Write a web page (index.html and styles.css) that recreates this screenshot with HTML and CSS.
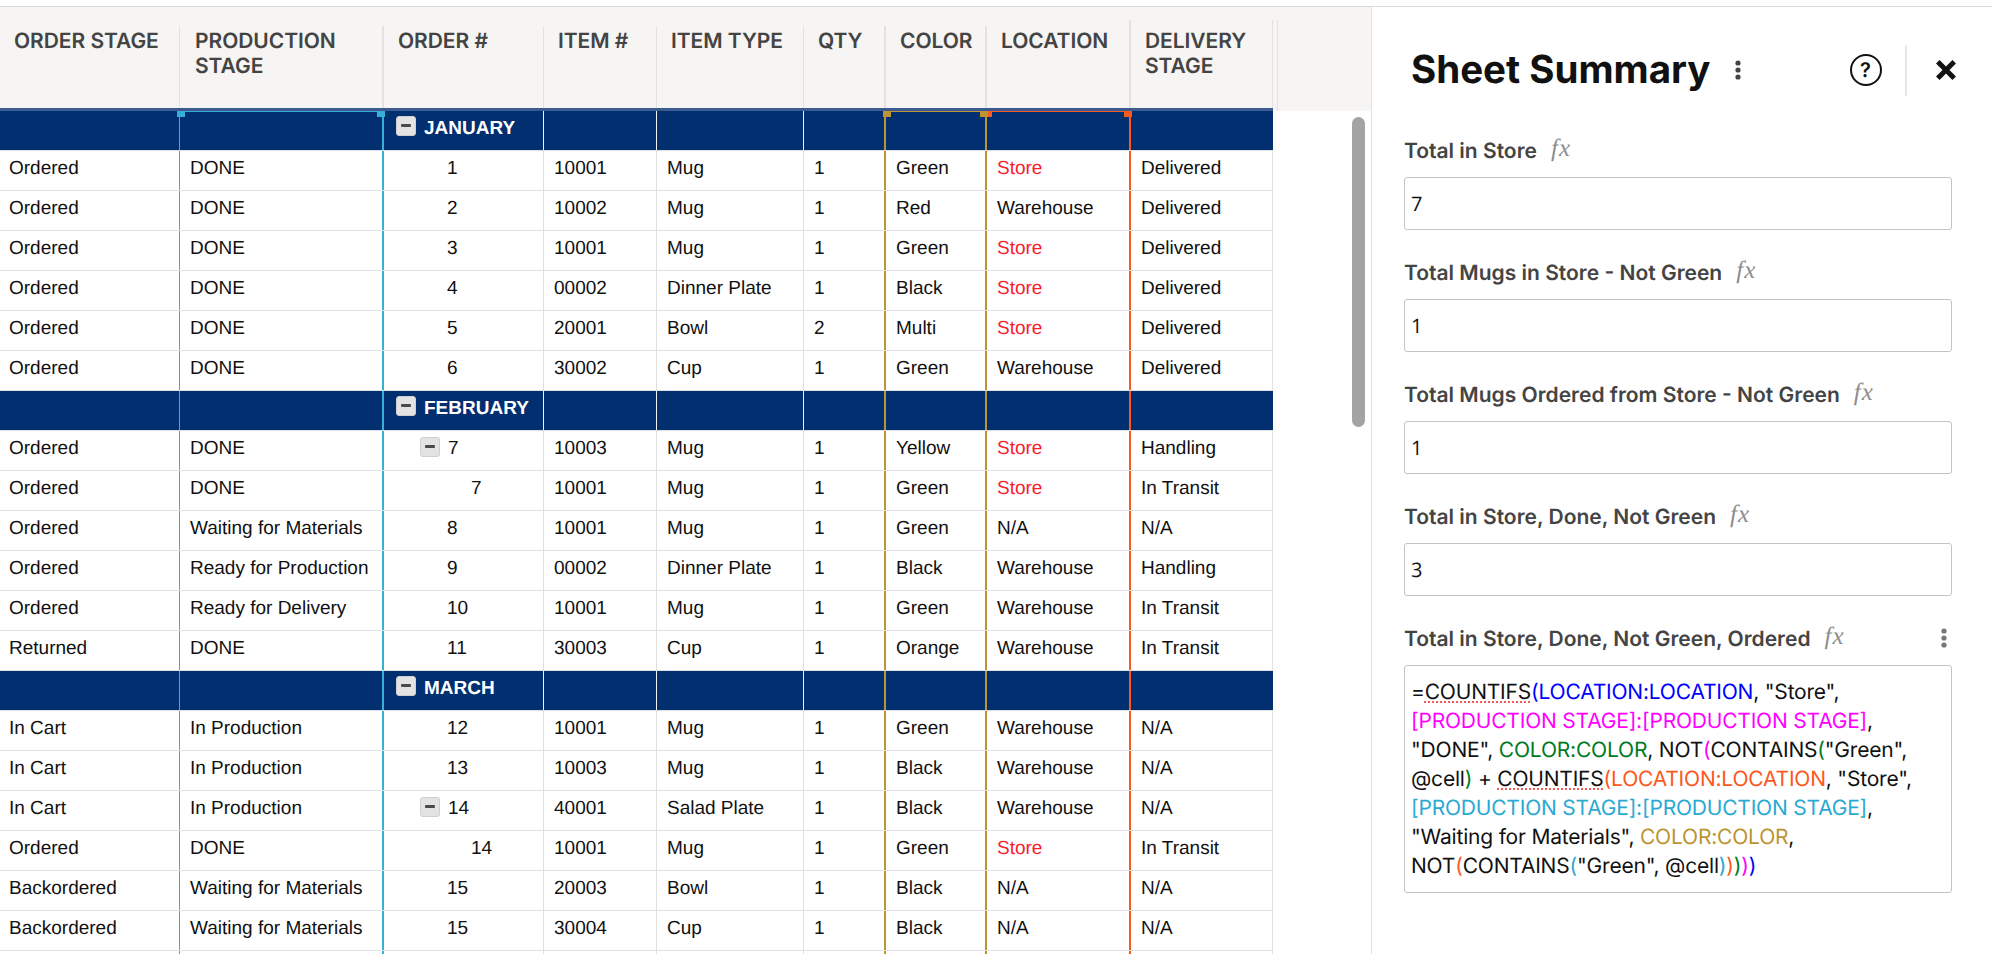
FILE: index.html
```html
<!DOCTYPE html>
<html lang="en">
<head>
<meta charset="utf-8">
<title>Sheet Summary</title>
<link rel="stylesheet" href="styles.css">
</head>
<body>
<div class="app">
  <main class="sheet">
    <div class="grid">
      <div class="row head">
        <div>ORDER STAGE</div><div>PRODUCTION STAGE</div><div>ORDER #</div><div>ITEM #</div><div>ITEM TYPE</div><div>QTY</div><div>COLOR</div><div>LOCATION</div><div>DELIVERY STAGE</div>
      </div>
      <div class="row group first">
        <div></div>
        <div><i class="handle h-blue h-l"></i></div>
        <div class="month"><i class="handle h-blue h-e"></i><span class="toggle"></span>JANUARY</div>
        <div></div><div></div><div></div>
        <div><i class="handle h-gold h-l"></i></div>
        <div><i class="handle h-gold h-e"></i><i class="handle h-orange h-r"></i></div>
        <div><i class="handle h-orange h-e"></i></div>
      </div>
      <div class="row"><div>Ordered</div><div>DONE</div><div class="num">1</div><div>10001</div><div>Mug</div><div>1</div><div>Green</div><div class="red">Store</div><div>Delivered</div></div>
      <div class="row"><div>Ordered</div><div>DONE</div><div class="num">2</div><div>10002</div><div>Mug</div><div>1</div><div>Red</div><div>Warehouse</div><div>Delivered</div></div>
      <div class="row"><div>Ordered</div><div>DONE</div><div class="num">3</div><div>10001</div><div>Mug</div><div>1</div><div>Green</div><div class="red">Store</div><div>Delivered</div></div>
      <div class="row"><div>Ordered</div><div>DONE</div><div class="num">4</div><div>00002</div><div>Dinner Plate</div><div>1</div><div>Black</div><div class="red">Store</div><div>Delivered</div></div>
      <div class="row"><div>Ordered</div><div>DONE</div><div class="num">5</div><div>20001</div><div>Bowl</div><div>2</div><div>Multi</div><div class="red">Store</div><div>Delivered</div></div>
      <div class="row"><div>Ordered</div><div>DONE</div><div class="num">6</div><div>30002</div><div>Cup</div><div>1</div><div>Green</div><div>Warehouse</div><div>Delivered</div></div>
      <div class="row group">
        <div></div><div></div><div class="month"><span class="toggle"></span>FEBRUARY</div><div></div><div></div><div></div><div></div><div></div><div></div>
      </div>
      <div class="row"><div>Ordered</div><div>DONE</div><div class="num parent"><span class="toggle"></span>7</div><div>10003</div><div>Mug</div><div>1</div><div>Yellow</div><div class="red">Store</div><div>Handling</div></div>
      <div class="row"><div>Ordered</div><div>DONE</div><div class="num child">7</div><div>10001</div><div>Mug</div><div>1</div><div>Green</div><div class="red">Store</div><div>In Transit</div></div>
      <div class="row"><div>Ordered</div><div>Waiting for Materials</div><div class="num">8</div><div>10001</div><div>Mug</div><div>1</div><div>Green</div><div>N/A</div><div>N/A</div></div>
      <div class="row"><div>Ordered</div><div>Ready for Production</div><div class="num">9</div><div>00002</div><div>Dinner Plate</div><div>1</div><div>Black</div><div>Warehouse</div><div>Handling</div></div>
      <div class="row"><div>Ordered</div><div>Ready for Delivery</div><div class="num">10</div><div>10001</div><div>Mug</div><div>1</div><div>Green</div><div>Warehouse</div><div>In Transit</div></div>
      <div class="row"><div>Returned</div><div>DONE</div><div class="num">11</div><div>30003</div><div>Cup</div><div>1</div><div>Orange</div><div>Warehouse</div><div>In Transit</div></div>
      <div class="row group">
        <div></div><div></div><div class="month"><span class="toggle"></span>MARCH</div><div></div><div></div><div></div><div></div><div></div><div></div>
      </div>
      <div class="row"><div>In Cart</div><div>In Production</div><div class="num">12</div><div>10001</div><div>Mug</div><div>1</div><div>Green</div><div>Warehouse</div><div>N/A</div></div>
      <div class="row"><div>In Cart</div><div>In Production</div><div class="num">13</div><div>10003</div><div>Mug</div><div>1</div><div>Black</div><div>Warehouse</div><div>N/A</div></div>
      <div class="row"><div>In Cart</div><div>In Production</div><div class="num parent"><span class="toggle"></span>14</div><div>40001</div><div>Salad Plate</div><div>1</div><div>Black</div><div>Warehouse</div><div>N/A</div></div>
      <div class="row"><div>Ordered</div><div>DONE</div><div class="num child">14</div><div>10001</div><div>Mug</div><div>1</div><div>Green</div><div class="red">Store</div><div>In Transit</div></div>
      <div class="row"><div>Backordered</div><div>Waiting for Materials</div><div class="num">15</div><div>20003</div><div>Bowl</div><div>1</div><div>Black</div><div>N/A</div><div>N/A</div></div>
      <div class="row"><div>Backordered</div><div>Waiting for Materials</div><div class="num">15</div><div>30004</div><div>Cup</div><div>1</div><div>Black</div><div>N/A</div><div>N/A</div></div>
      <div class="row"><div></div><div></div><div></div><div></div><div></div><div></div><div></div><div></div><div></div></div>
    </div>
    <div class="scrollbar"></div>
  </main>
  <aside class="panel">
    <header class="panel-head">
      <h1>Sheet Summary</h1>
      <svg class="dots" width="6" height="20" viewBox="0 0 6 20"><circle cx="3" cy="3" r="2.6"/><circle cx="3" cy="10" r="2.6"/><circle cx="3" cy="17" r="2.6"/></svg>
      <span class="help">?</span>
      <span class="divider"></span>
      <svg class="close" width="20" height="20" viewBox="0 0 20 20"><path d="M1.8 1.8 18.2 18.2M18.2 1.8 1.8 18.2"/></svg>
    </header>
    <section class="field">
      <div class="label">Total in Store<span class="fx">fx</span></div>
      <div class="input">7</div>
    </section>
    <section class="field">
      <div class="label">Total Mugs in Store - Not Green<span class="fx">fx</span></div>
      <div class="input">1</div>
    </section>
    <section class="field">
      <div class="label">Total Mugs Ordered from Store - Not Green<span class="fx">fx</span></div>
      <div class="input">1</div>
    </section>
    <section class="field">
      <div class="label">Total in Store, Done, Not Green<span class="fx">fx</span></div>
      <div class="input">3</div>
    </section>
    <section class="field">
      <div class="label">Total in Store, Done, Not Green, Ordered<span class="fx">fx</span>
        <svg class="dots more" width="6" height="20" viewBox="0 0 6 20"><circle cx="3" cy="3" r="2.6"/><circle cx="3" cy="10" r="2.6"/><circle cx="3" cy="17" r="2.6"/></svg>
      </div>
      <div class="input formula">=<span class="sq">COUNTIFS</span><span class="blue">(LOCATION:LOCATION</span>, "Store",<br><span class="pink">[PRODUCTION STAGE]:[PRODUCTION STAGE]</span>,<br>"DONE", <span class="green">COLOR:COLOR</span>, NOT<span class="pink">(</span>CONTAINS<span class="green">(</span>"Green",<br>@cell<span class="green">)</span> + <span class="sq">COUNTIFS</span><span class="orange">(LOCATION:LOCATION</span>, "Store",<br><span class="cyan">[PRODUCTION STAGE]:[PRODUCTION STAGE]</span>,<br>"Waiting for Materials", <span class="gold">COLOR:COLOR</span>,<br>NOT<span class="orange">(</span>CONTAINS<span class="cyan">(</span>"Green", @cell<span class="cyan">)</span><span class="orange">)</span><span class="green">)</span><span class="pink">)</span><span class="blue">)</span></div>
    </section>
  </aside>
</div>
</body>
</html>
```
FILE: styles.css
```css
* { box-sizing: border-box; }
html, body { margin: 0; height: 100%; overflow: hidden; background: #fff; }
body { padding-top: 6px; text-rendering: geometricPrecision; }
.app {
  display: flex;
  height: 948px;
  border-top: 1px solid #d9d9d9;
  overflow: hidden;
}
.sheet {
  position: relative;
  width: 1371px;
  flex: none;
  height: 100%;
  overflow: hidden;
  background: linear-gradient(#f6f5f3 104px, #fff 104px);
}
.grid { display: flex; flex-direction: column; width: 1273px; }
.row {
  display: grid;
  grid-template-columns: 179px 203px 161px 113px 147px 81px 101px 144px 144px;
  height: 40px;
  flex: none;
  font: 19px/26px "Liberation Sans", Arial, sans-serif;
  color: #111;
  background: #fff;
  border-bottom: 1px solid #e0e0e0;
}
.row > div {
  position: relative;
  padding: 5px 0 0 10px;
  border-left: 1px solid #e0e0e0;
  white-space: nowrap;
}
.row > :nth-child(1) { border-left: 0; padding-left: 9px; }
.row > :nth-child(2) { border-left-color: #36afd6; }
.row > :nth-child(3) { border-left: 2px solid #36afd6; }
.row > :nth-child(7), .row > :nth-child(8) { border-left: 2px solid #bd9432; }
.row > :nth-child(9) { border-left: 2px solid #f95a1d; border-right: 1px solid #e0e0e0; }
.row > .num { padding-left: 63px; }
.row > .num.parent { padding-left: 36px; display: flex; gap: 8px; }
.row > .num.child { padding-left: 87px; }
.red { color: #f5222d; }

.head {
  height: 104px;
  background: #f6f5f3;
  border-bottom: 3px solid #3d5b8f;
  font: 600 21px/25px Inter, "Liberation Sans", sans-serif;
  letter-spacing: -0.05px;
  color: #444;
}
.row.head > div {
  margin-top: 19px;
  padding: 3px 4px 0 14px;
  white-space: normal;
  border-left-color: #e2e2e0;
}
.row.head > :nth-child(1) { padding-left: 14px; }
.row.head > :nth-child(2) { padding-left: 15px; }
.row.head > :nth-child(9) { border-right: 1px solid #e2e2e0; margin-top: 13px; padding-top: 9px; }
.row.head > :nth-child(9)::after {
  content: "";
  position: absolute;
  top: 0;
  bottom: -3px;
  right: -6px;
  width: 1px;
  background: #e2e2e0;
}

.group {
  background: #012f6f;
  color: #fff;
  font-weight: 700;
  border-bottom: 1px solid #e0e0e0;
}
.row.group > :nth-child(4), .row.group > :nth-child(5), .row.group > :nth-child(6) { border-left-color: #f1f1f1; }
.row.group > :nth-child(9) { border-right-color: #012f6f; }
.row.group > .month { display: flex; gap: 8px; padding-left: 12px; padding-top: 5px; }
.row.group > .month .toggle { margin-top: 0; }
.row.first > :nth-child(2) { box-shadow: inset 0 1px 0 #36afd6; }
.row.first > :nth-child(7) { box-shadow: inset 0 1px 0 #bd9432; }
.row.first > :nth-child(8) { box-shadow: inset 0 1px 0 #f95a1d; }

.toggle {
  position: relative;
  flex: none;
  width: 20px;
  height: 20px;
  margin-top: 1px;
  border-radius: 3px;
  background: #e3e3e3;
  border: 1px solid #cfcfcf;
}
.toggle::after {
  content: "";
  position: absolute;
  left: 4px;
  right: 4px;
  top: 7px;
  height: 3px;
  border-radius: 1px;
  background: #4a4a4a;
}
.handle { position: absolute; top: 0; width: 8px; height: 6px; }
.h-l { left: -3px; }
.h-e { left: -7px; }
.h-r { left: 1px; width: 4px; }
.h-blue { background: #36afd6; }
.h-gold { background: #bd9432; }
.h-orange { background: #f95a1d; }

.scrollbar {
  position: absolute;
  left: 1352px;
  top: 110px;
  width: 13px;
  height: 310px;
  border-radius: 7px;
  background: #a3a3a3;
}

.panel {
  flex: 1;
  min-width: 0;
  border-left: 1px solid #e0e0e0;
  padding: 0 37px 0 32px;
  font-family: Inter, "Liberation Sans", sans-serif;
}
.panel-head {
  display: flex;
  align-items: center;
  height: 52px;
  margin-top: 37px;
  margin-bottom: 41px;
  padding-left: 7px;
}
.panel-head h1 {
  margin: 0;
  font: 700 38.5px/52px Inter, "Liberation Sans", sans-serif;
  color: #111;
  white-space: nowrap;
}
.dots { flex: none; fill: #444; }
.panel-head .dots { margin-left: 24px; }
.help {
  flex: none;
  width: 32px;
  height: 32px;
  margin-left: 109px;
  border: 2px solid #111;
  border-radius: 50%;
  font: 600 20px/28px Inter, sans-serif;
  text-align: center;
  color: #111;
}
.divider { flex: none; width: 2px; height: 51px; margin-left: 23px; background: #e6e6e6; }
.close { flex: none; margin-left: 29px; stroke: #111; stroke-width: 5; fill: none; }

.label {
  display: flex;
  align-items: center;
  height: 30px;
  margin-bottom: 10px;
  font: 600 21px/30px Inter, "Liberation Sans", sans-serif;
  color: #444;
  white-space: nowrap;
}
.fx {
  margin-left: 14px;
  margin-top: -7px;
  font: italic 400 25px/24px "Liberation Serif", serif;
  color: #8c8c8c;
  letter-spacing: 1px;
}
.more { margin-left: auto; margin-right: 8px; margin-top: -4px; fill: #777; }
.input {
  width: 548px;
  height: 53px;
  margin-bottom: 29px;
  padding: 11px 6px 9px;
  border: 1px solid #c4c4c4;
  border-radius: 3px;
  font: 400 20px/29px "Open Sans", sans-serif;
  color: #111;
  background: #fff;
}
.formula {
  height: 228px;
  margin-bottom: 0;
  padding: 12px 6px;
  font: 400 21px/29px Inter, "Liberation Sans", sans-serif;
  letter-spacing: -0.2px;
  white-space: nowrap;
}
.sq { text-decoration: underline dotted #f25a5a 2px; text-underline-offset: 2px; }
.blue { color: #0000ff; }
.pink { color: #ff00ff; }
.green { color: #007a1f; }
.orange { color: #fb5a1e; }
.cyan { color: #2aa9d2; }
.gold { color: #bd9432; }
```
